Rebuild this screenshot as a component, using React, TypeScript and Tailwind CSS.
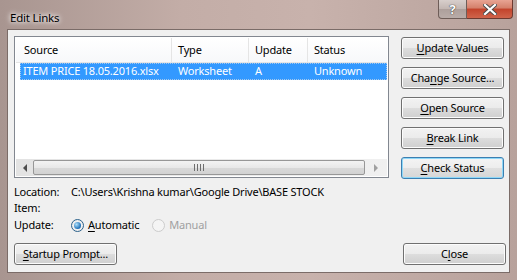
import React from 'react';

const font = { fontFamily: '"Noto Sans", "Open Sans", Arial, sans-serif' };

// Win7 style push button
const Btn: React.FC<{ children: React.ReactNode; focused?: boolean; className?: string }> = ({ children, focused, className }) => (
  <div
    className={`flex h-[22px] items-center justify-center whitespace-nowrap rounded-[3px] border text-[11px] tracking-[-0.2px] text-black ${
      focused
        ? 'border-[#3c7fb1] shadow-[inset_0_0_0_1px_#8fd8f8] bg-[linear-gradient(#f4f4f4_0%,#ededed_50%,#e0e0e0_50%,#d6d6d6_100%)]'
        : 'border-[#707070] shadow-[inset_0_0_0_1px_#fcfcfc] bg-[linear-gradient(#f2f2f2_0%,#ebebeb_50%,#dddddd_50%,#cfcfcf_100%)]'
    } ${className ?? ''}`}
  >
    {children}
  </div>
);

const U: React.FC<{ children: React.ReactNode }> = ({ children }) => <span className="underline underline-offset-2">{children}</span>;

const App: React.FC = () => {
  return (
    <div
      className="flex h-[280px] w-[517px] flex-col overflow-hidden bg-[linear-gradient(90deg,#a89590_0%,#c3ada7_35%,#c8b2ac_60%,#b8a29c_100%)]"
      style={font}
    >
      {/* title bar */}
      <div className="flex h-[29px] shrink-0 items-start">
        <div className="pl-[10px] pt-[9px] text-[11.5px] tracking-[-0.2px] text-black [text-shadow:0_0_6px_#ffffff,0_0_4px_#ffffff]">Edit Links</div>
        <div className="ml-auto mr-[4px] flex">
          <div className="flex h-[19px] w-[29px] items-center justify-center rounded-bl-[4px] border border-t-0 border-[#6e5d58] bg-[linear-gradient(#d8cfcc_0%,#c2b6b2_50%,#ad9f9b_50%,#b9aca8_100%)] text-[13px] font-bold leading-none text-white [text-shadow:0_0_1px_#333,0_0_1px_#333]">
            ?
          </div>
          <div className="flex h-[19px] w-[46px] items-center justify-center rounded-br-[4px] border border-l-0 border-t-0 border-[#6e3a30] bg-[linear-gradient(#e8a493_0%,#d47f6a_45%,#c2432b_50%,#d0644b_100%)]">
            <svg width="14" height="11" viewBox="0 0 14 11">
              <path d="M2 1 L12 10 M12 1 L2 10" stroke="#4a4a4a" strokeWidth="4" strokeLinecap="square" />
              <path d="M2 1 L12 10 M12 1 L2 10" stroke="#ffffff" strokeWidth="2.2" strokeLinecap="square" />
            </svg>
          </div>
        </div>
      </div>

      {/* client area */}
      <div className="mx-[7px] mb-[7px] flex flex-1 flex-col border border-[#7b6c68] bg-[#f0f0f0] pl-[6px] pr-[3px] pt-[6px] text-[11px] tracking-[-0.2px]">
        <div className="flex">
          {/* list view */}
          <div className="flex h-[142px] w-[375px] flex-col border border-[#828790] bg-white p-[1px]">
            <div className="flex h-[25px] shrink-0 border-b border-[#e5e5e5] bg-[linear-gradient(#ffffff,#f7f8fa)] text-black">
              <div className="flex w-[156px] items-center border-r border-[#e5e5e5] pl-[8px]">Source</div>
              <div className="flex w-[77px] items-center border-r border-[#e5e5e5] pl-[6px]">Type</div>
              <div className="flex w-[59px] items-center border-r border-[#e5e5e5] pl-[6px]">Update</div>
              <div className="flex flex-1 items-center pl-[6px]">Status</div>
            </div>
            <div className="flex-1 pl-[4px] pt-[0px]">
              <div className="flex h-[17px] items-center whitespace-nowrap bg-[#3399ff] text-white outline-1 outline-dotted outline-offset-[-1px] outline-[#a4c9ee]">
                <div className="w-[152px] pl-[3px]">ITEM PRICE 18.05.2016.xlsx</div>
                <div className="w-[77px] pl-[6px]">Worksheet</div>
                <div className="w-[59px] pl-[6px]">A</div>
                <div className="flex-1 pl-[6px]">Unknown</div>
              </div>
            </div>
            {/* horizontal scrollbar */}
            <div className="flex h-[17px] shrink-0 items-center bg-[linear-gradient(90deg,#e3e3e3,#f0f0f0)]">
              <div className="flex w-[17px] justify-center">
                <div className="h-0 w-0 border-y-[4px] border-r-[4px] border-y-transparent border-r-[#4d4d4d]" />
              </div>
              <div className="flex h-[15px] flex-1 items-center justify-center rounded-[2px] border border-[#979797] bg-[linear-gradient(#f3f3f3,#e8e8e8_50%,#d9d9d9_50%,#d2d2d2)]">
                <div className="flex gap-[2px]">
                  <div className="h-[7px] w-[1px] bg-[#6e6e6e]" />
                  <div className="h-[7px] w-[1px] bg-[#6e6e6e]" />
                  <div className="h-[7px] w-[1px] bg-[#6e6e6e]" />
                  <div className="h-[7px] w-[1px] bg-[#6e6e6e]" />
                </div>
              </div>
              <div className="flex w-[22px] justify-center">
                <div className="h-0 w-0 border-y-[4px] border-l-[4px] border-y-transparent border-l-[#a0a0a0]" />
              </div>
            </div>
          </div>

          {/* right buttons */}
          <div className="ml-[12px] flex w-[103px] flex-col gap-[8px] pt-[1px]">
            <Btn><U>U</U>pdate Values</Btn>
            <Btn>Cha<U>n</U>ge Source...</Btn>
            <Btn><U>O</U>pen Source</Btn>
            <Btn><U>B</U>reak Link</Btn>
            <Btn focused><U>C</U>heck Status</Btn>
          </div>
        </div>

        {/* info */}
        <div className="mt-[5px] flex flex-col whitespace-nowrap text-black">
          <div className="flex h-[16px] items-center">
            <div className="w-[57px]">Location:</div>
            <div>C:\Users\Krishna kumar\Google Drive\BASE STOCK</div>
          </div>
          <div className="flex h-[16px] items-center">Item:</div>
          <div className="flex h-[18px] items-center">
            <div className="w-[57px]">Update:</div>
            <div className="flex h-[13px] w-[13px] items-center justify-center rounded-full border border-[#2c628b] bg-[radial-gradient(#ffffff,#e4e4e4)]">
              <div className="h-[7px] w-[7px] rounded-full bg-[radial-gradient(circle_at_35%_35%,#aee0fa,#1d6fb8_70%,#0e4d87)]" />
            </div>
            <div className="ml-[4px]"><U>A</U>utomatic</div>
            <div className="ml-[13px] h-[13px] w-[13px] rounded-full border border-[#cccccc] bg-[#f4f4f4]" />
            <div className="ml-[4px] text-[#a0a0a0]">Manual</div>
          </div>
        </div>

        {/* bottom buttons */}
        <div className="mt-[9px] flex">
          <Btn className="w-[103px]"><U>S</U>tartup Prompt...</Btn>
          <Btn className="ml-auto w-[103px]">C<U>l</U>ose</Btn>
        </div>
      </div>
    </div>
  );
};

export default App;
